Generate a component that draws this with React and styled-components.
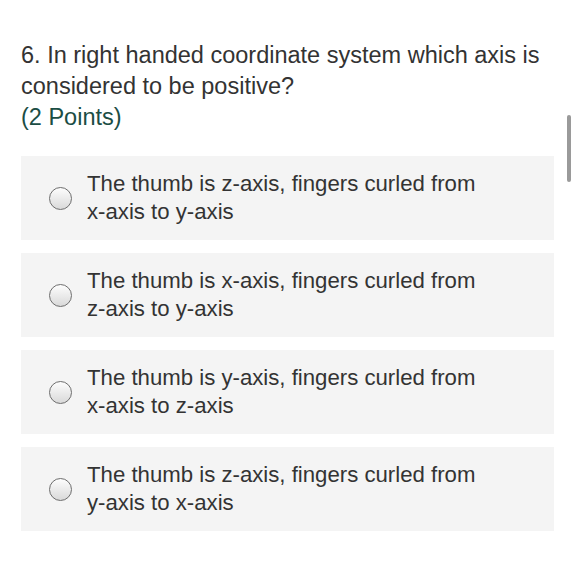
import React from "react"
import styled, { createGlobalStyle } from "styled-components"

const GlobalStyle = createGlobalStyle`
  html, body {
    margin: 0;
    padding: 0;
    background: #fff;
    font-family: "Liberation Sans", Arial, Helvetica, sans-serif;
    color: #333;
  }
`

const Page = styled.div`
  position: relative;
  width: 576px;
  height: 569px;
  overflow: hidden;
  padding: 40px 22px 0 21px;
  box-sizing: border-box;
`

const Question = styled.div`
  font-size: 23.5px;
  line-height: 31px;
  color: #333;
`

const Points = styled.div`
  font-size: 23.5px;
  line-height: 31px;
  color: #1b4d44;
`

const Options = styled.div`
  display: flex;
  flex-direction: column;
  gap: 13px;
  margin-top: 23px;
`

const Option = styled.label`
  display: flex;
  align-items: center;
  gap: 15px;
  background: #f4f4f4;
  height: 84px;
  padding: 0 0 0 28px;
  box-sizing: border-box;
`

const Radio = styled.span`
  flex: none;
  width: 23px;
  height: 23px;
  border-radius: 50%;
  border: 1.5px solid #6e6e6e;
  background: linear-gradient(#fdfdfd, #d9d9d9);
  box-sizing: border-box;
`

const OptionText = styled.div`
  font-size: 22.2px;
  line-height: 28px;
  color: #333;
`

const Scrollbar = styled.div`
  position: absolute;
  right: 5px;
  top: 115px;
  width: 4px;
  height: 67px;
  border-radius: 2px;
  background: #9a9a9a;
`

const options = [
  ["The thumb is z-axis, fingers curled from", "x-axis to y-axis"],
  ["The thumb is x-axis, fingers curled from", "z-axis to y-axis"],
  ["The thumb is y-axis, fingers curled from", "x-axis to z-axis"],
  ["The thumb is z-axis, fingers curled from", "y-axis to x-axis"],
]

export default function App() {
  return (
    <>
      <GlobalStyle />
      <Page>
        <Question>
          6. In right handed coordinate system which axis is
          <br />
          considered to be positive?
        </Question>
        <Points>(2 Points)</Points>
        <Options>
          {options.map(([a, b], i) => (
            <Option key={i}>
              <Radio />
              <OptionText>
                {a}
                <br />
                {b}
              </OptionText>
            </Option>
          ))}
        </Options>
        <Scrollbar />
      </Page>
    </>
  )
}
